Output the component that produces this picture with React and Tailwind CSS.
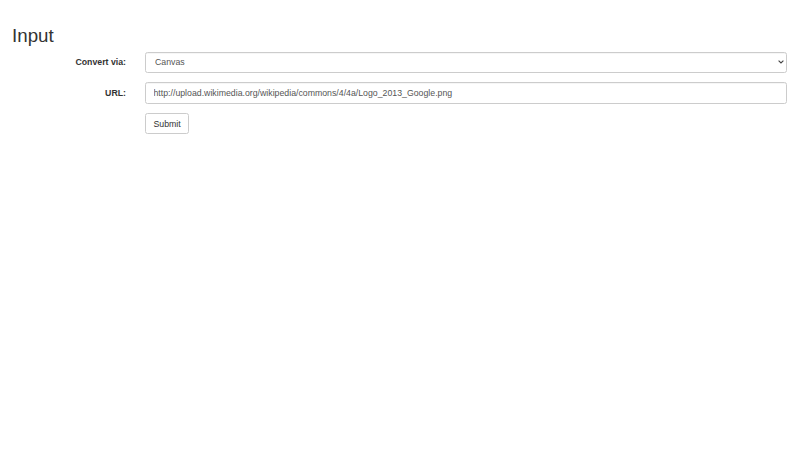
import React from "react";

export default function App() {
  const font = { fontFamily: '"Liberation Sans", Arial, Helvetica, sans-serif' };
  return (
    <div className="w-[800px] h-[450px] bg-white text-[#333] overflow-hidden" style={font}>
      <div className="pl-[12px] pr-[13px]">
        <h2 className="mt-[25.5px] mb-[5.5px] text-[18.75px] leading-[1.1] font-normal text-[#333]">Input</h2>
      </div>
      <form className="flex flex-col gap-[9.5px] pr-[13px]" onSubmit={(e) => e.preventDefault()}>
        <div className="flex items-center h-[21.25px]">
          <label className="w-[126px] text-right text-[8.75px] font-bold text-[#333] leading-[1.43]">Convert via:</label>
          <div className="flex-1 ml-[19px] relative flex">
            <select
              defaultValue="canvas"
              className="block w-full h-[21.25px] pl-[9px] pr-[16px] text-[8.75px] text-[#555] bg-white border border-[#ccc] rounded-[2.5px] shadow-[inset_0_0.6px_0.6px_rgba(0,0,0,0.075)] appearance-none outline-none"
              style={font}
            >
              <option value="canvas">Canvas</option>
              <option value="filereader">FileReader</option>
            </select>
            <svg
              className="absolute right-[3px] top-[8.5px] pointer-events-none"
              width="6"
              height="4"
              viewBox="0 0 6 4"
            >
              <path d="M0.6 0.6 L3 3 L5.4 0.6" fill="none" stroke="#444" strokeWidth="1.1" />
            </svg>
          </div>
        </div>
        <div className="flex items-center h-[21.25px]">
          <label className="w-[126px] text-right text-[8.75px] font-bold text-[#333] leading-[1.43]">URL:</label>
          <div className="flex-1 ml-[19px] flex">
            <input
              type="text"
              defaultValue="http://upload.wikimedia.org/wikipedia/commons/4/4a/Logo_2013_Google.png"
              className="block w-full h-[21.25px] px-[7.5px] text-[8.75px] text-[#555] bg-white border border-[#ccc] rounded-[2.5px] shadow-[inset_0_0.6px_0.6px_rgba(0,0,0,0.075)] outline-none"
              style={font}
            />
          </div>
        </div>
        <div className="flex h-[21.25px]">
          <div className="w-[126px]" />
          <div className="flex-1 ml-[19px] flex items-start">
            <button
              type="submit"
              className="block h-[21.25px] px-[7.5px] text-[8.75px] leading-[1.43] text-[#333] bg-white border border-[#ccc] rounded-[2.5px]"
              style={font}
            >
              Submit
            </button>
          </div>
        </div>
      </form>
    </div>
  );
}
